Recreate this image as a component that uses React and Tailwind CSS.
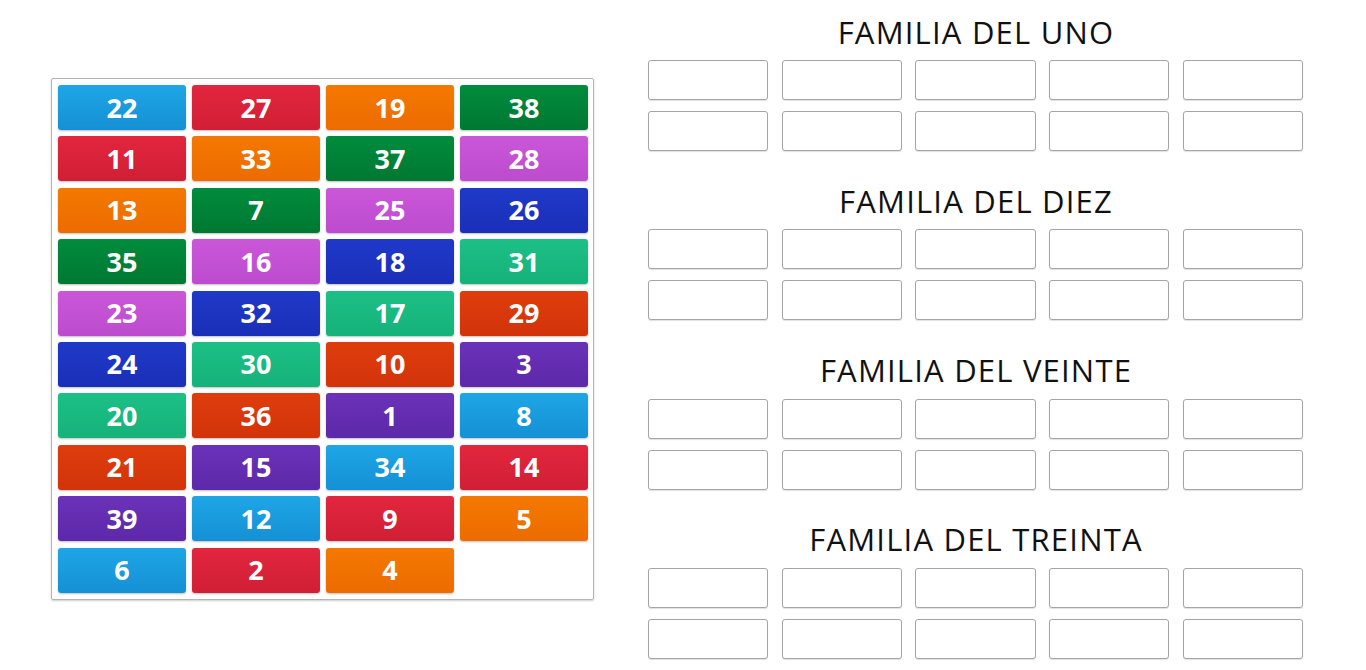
import React from 'react';

const palette = [
  'from-[#1ea6e6] to-[#1590d5]', // blue
  'from-[#e2263e] to-[#d01f35]', // red
  'from-[#f47800] to-[#ec6c00]', // orange
  'from-[#008c3d] to-[#007832]', // green
  'from-[#ca57d8] to-[#bd4bce]', // pink
  'from-[#1f39c8] to-[#1a2fb8]', // dark blue
  'from-[#1cc086] to-[#15b27a]', // teal
  'from-[#df3d0d] to-[#d2330a]', // red orange
  'from-[#6a32b8] to-[#5e28aa]', // violet
];

const rows = [
  [22, 27, 19, 38],
  [11, 33, 37, 28],
  [13, 7, 25, 26],
  [35, 16, 18, 31],
  [23, 32, 17, 29],
  [24, 30, 10, 3],
  [20, 36, 1, 8],
  [21, 15, 34, 14],
  [39, 12, 9, 5],
  [6, 2, 4],
];

const groups = ['FAMILIA DEL UNO', 'FAMILIA DEL DIEZ', 'FAMILIA DEL VEINTE', 'FAMILIA DEL TREINTA'];

const Tile = ({ n, color }) => (
  <div
    className={`h-[45px] pb-[1px] rounded-[3px] bg-linear-to-b ${color} shadow-[0_1px_2px_rgba(0,0,0,0.25)] flex items-center justify-center text-white font-bold text-[27px] leading-none`}
  >
    {n}
  </div>
);

const Slot = () => (
  <div className="h-[40px] rounded-[3px] border border-[#a5a5a5] bg-white shadow-[0_1px_1px_rgba(0,0,0,0.12)]" />
);

export default function App() {
  return (
    <div
      className="w-[1366px] h-[670px] bg-white overflow-hidden flex items-start"
      style={{ fontFamily: '"Open Sans", "Liberation Sans", sans-serif' }}
    >
      <div className="ml-[51px] mt-[78px] w-[543px] h-[522px] border border-[#b4b4b4] rounded-[2px] shadow-[0_1px_2px_rgba(0,0,0,0.2)] pt-[6px] pl-[6px] pr-[5px]">
        <div className="grid grid-cols-4 gap-x-[6px] gap-y-[6.4px]">
          {rows.map((row, r) =>
            row.map((n, c) => <Tile key={n} n={n} color={palette[(r + c) % 9]} />)
          )}
        </div>
      </div>

      <div className="ml-[54px] w-[655px] pt-[12px] flex flex-col gap-[30.3px]">
        {groups.map((g) => (
          <div key={g}>
            <div className="h-[40px] mb-[8px] pl-[1px] flex items-center justify-center text-[31px] tracking-[1.2px] leading-none text-[#111]">
              {g}
            </div>
            <div className="grid grid-cols-5 gap-x-[13.5px] gap-y-[11px]">
              {Array.from({ length: 10 }).map((_, i) => (
                <Slot key={i} />
              ))}
            </div>
          </div>
        ))}
      </div>
    </div>
  );
}
